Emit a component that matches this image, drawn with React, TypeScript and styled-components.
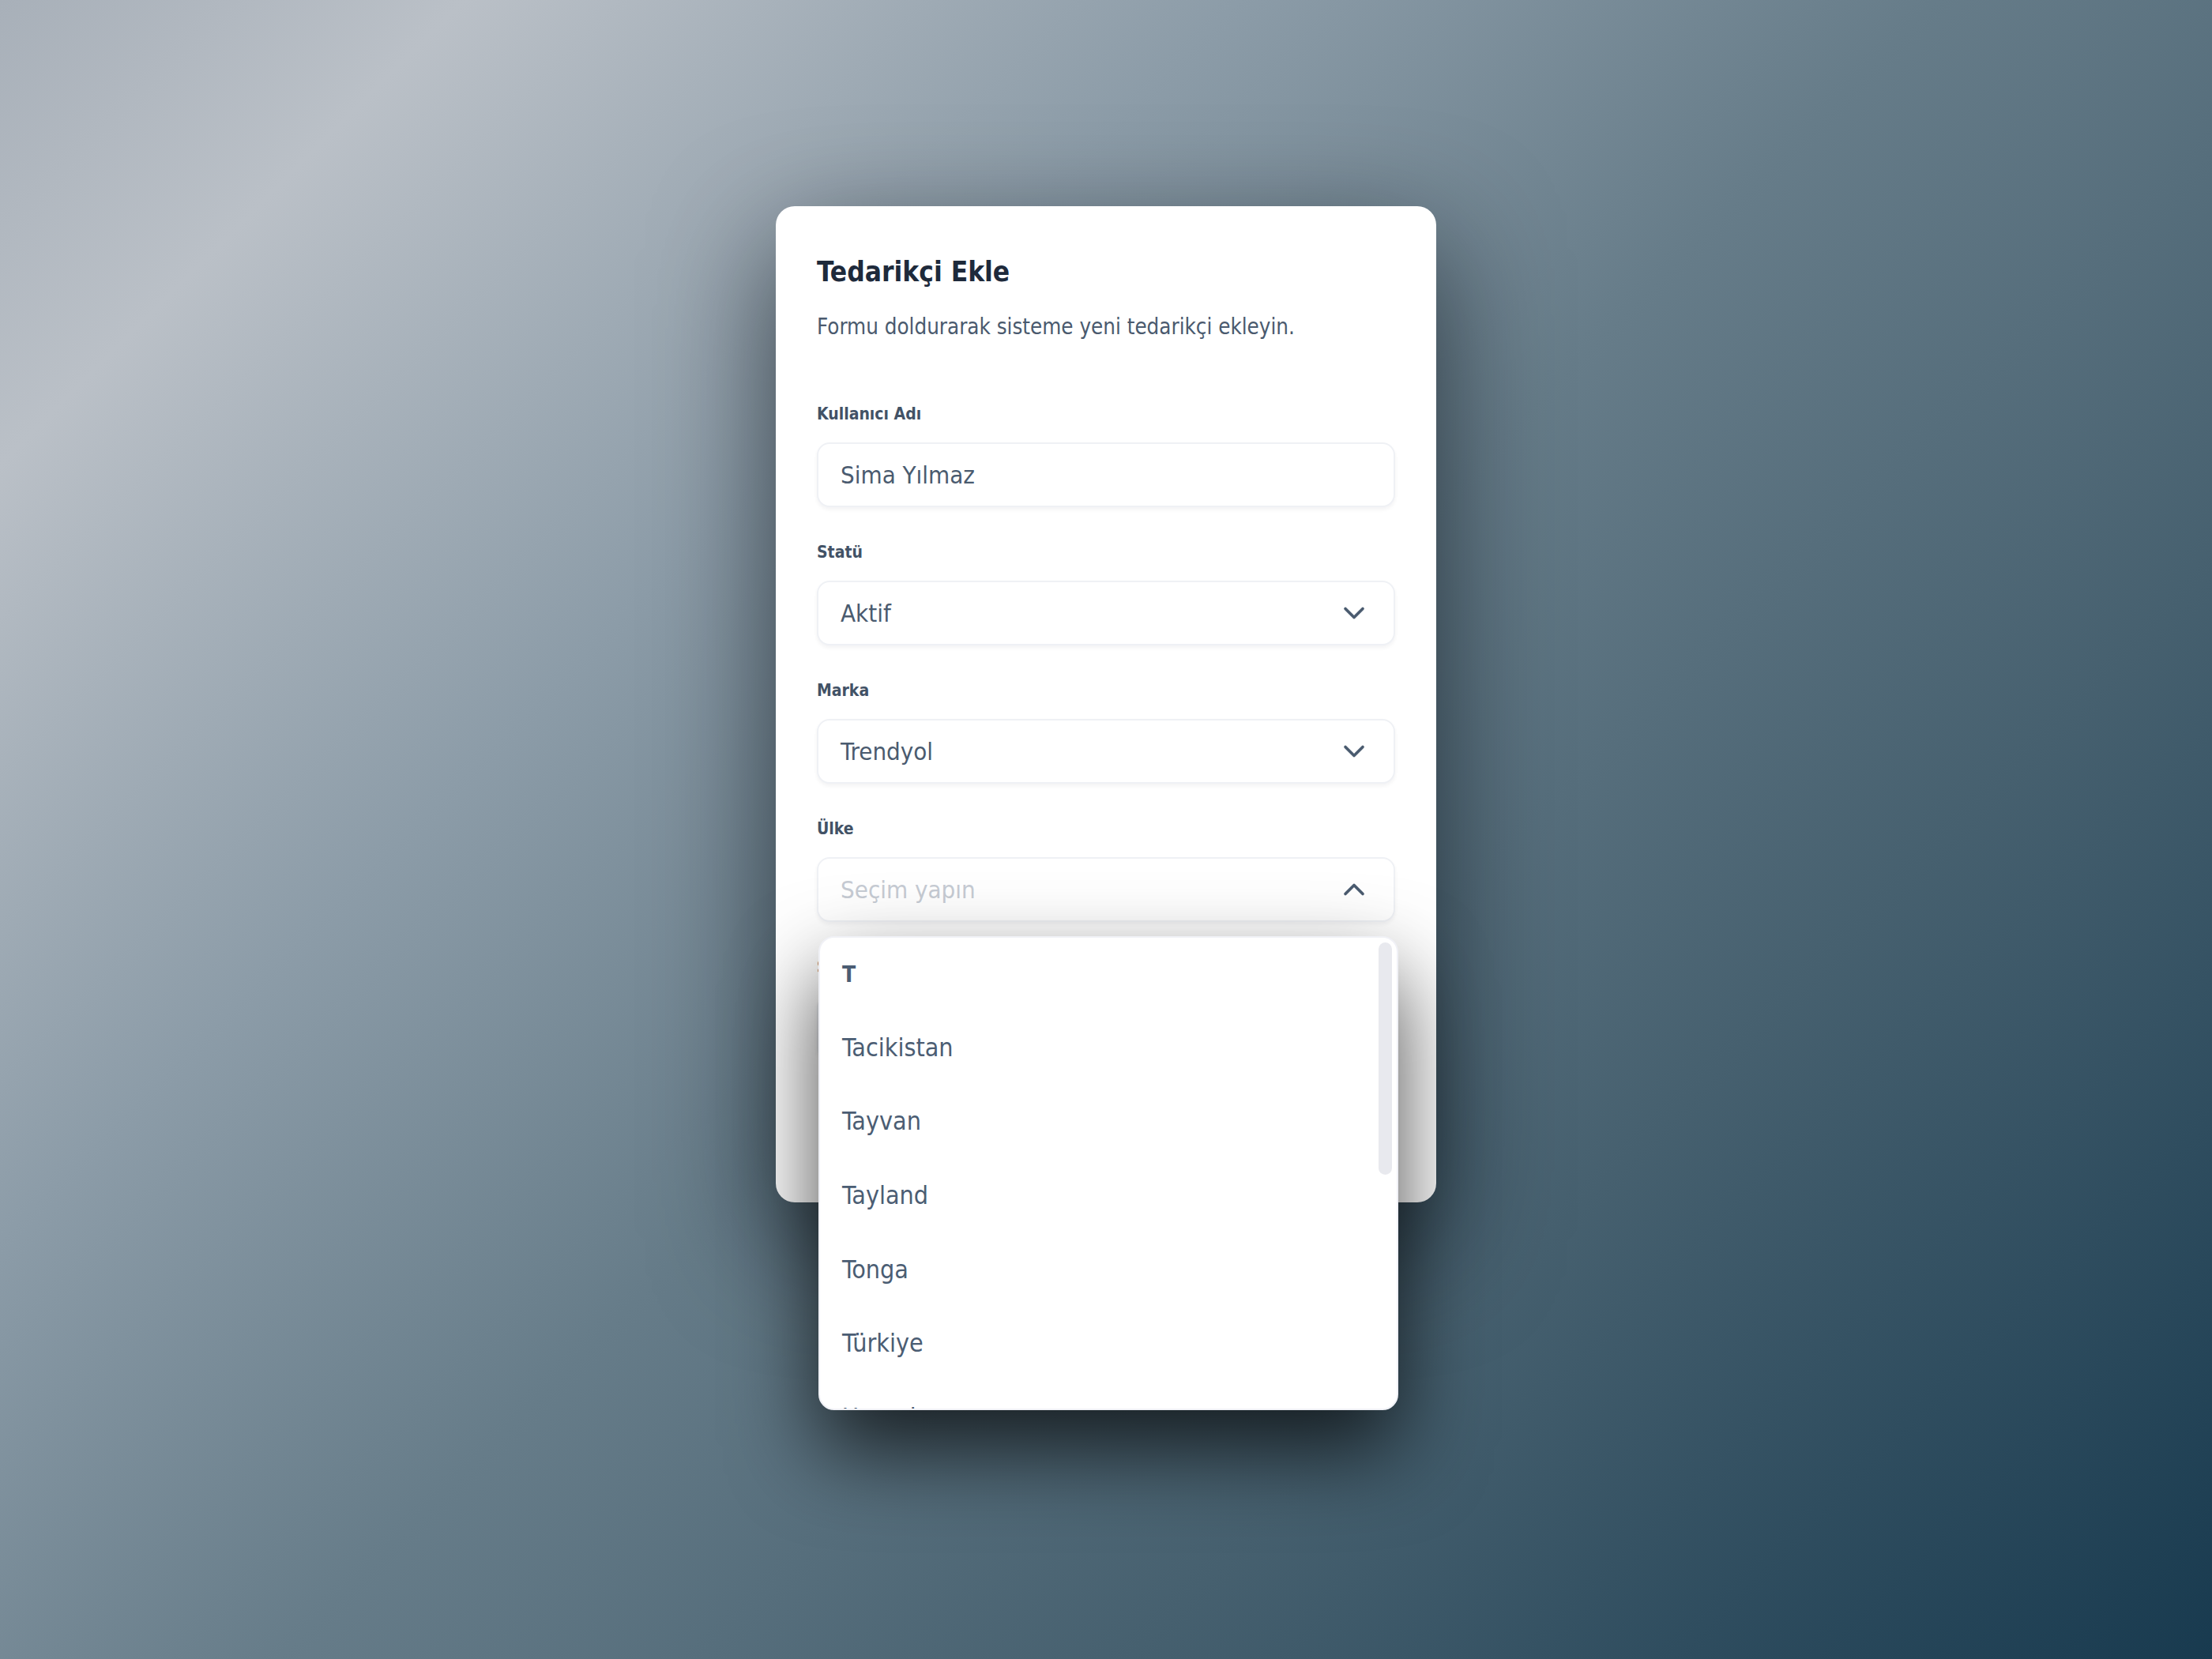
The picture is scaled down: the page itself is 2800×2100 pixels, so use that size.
import styled, { createGlobalStyle } from 'styled-components';
import { ChevronDown, ChevronUp } from 'lucide-react';

const FONT = `"DejaVu Sans Condensed", "Liberation Sans", sans-serif`;

const countries = ['Tacikistan', 'Tayvan', 'Tayland', 'Tonga', 'Türkiye', 'Uganda'];

function App() {
  return (
    <Page>
      <GlobalStyle />
      <Card>
        <Title>Tedarikçi Ekle</Title>
        <Subtitle>Formu doldurarak sisteme yeni tedarikçi ekleyin.</Subtitle>
        <Form>
          <Field>
            <Label>Kullanıcı Adı</Label>
            <Control>
              <Value>Sima Yılmaz</Value>
            </Control>
          </Field>
          <Field>
            <Label>Statü</Label>
            <Control>
              <Value>Aktif</Value>
              <ChevronDown size={44} strokeWidth={2} />
            </Control>
          </Field>
          <Field>
            <Label>Marka</Label>
            <Control>
              <Value>Trendyol</Value>
              <ChevronDown size={44} strokeWidth={2} />
            </Control>
          </Field>
          <Field>
            <Label>Ülke</Label>
            <Control>
              <Value $placeholder>Seçim yapın</Value>
              <ChevronUp size={44} strokeWidth={2} />
            </Control>
            <Dropdown>
              <GroupHeader>T</GroupHeader>
              {countries.map((c) => (
                <Option key={c}>{c}</Option>
              ))}
              <Thumb />
            </Dropdown>
          </Field>
          <Field>
            <Label>Şehir</Label>
            <Control>
              <Value $placeholder>Şehir girin</Value>
            </Control>
          </Field>
        </Form>
        <Footer>
          <Button>İptal</Button>
          <Button $primary>Kaydet</Button>
        </Footer>
      </Card>
    </Page>
  );
}

export default App;

const GlobalStyle = createGlobalStyle`
  html, body {
    margin: 0;
    padding: 0;
  }
  body {
    font-family: ${FONT};
  }
`;

const Page = styled.div`
  min-height: 2100px;
  box-sizing: border-box;
  padding-top: 261px;
  display: flex;
  justify-content: center;
  align-items: flex-start;
  background: linear-gradient(
    135deg,
    #a8b0b9 0%,
    #bac0c7 12%,
    #8c9ca8 32%,
    #667c89 50%,
    #46606f 72%,
    #183a4f 100%
  );
`;

const Card = styled.div`
  width: 836px;
  box-sizing: border-box;
  padding: 58px 52px 56px;
  background: #ffffff;
  border-radius: 24px;
  box-shadow: 0 50px 150px rgba(4, 10, 16, 0.62);
`;

const Title = styled.h2`
  margin: 0;
  font-size: 35px;
  line-height: 50px;
  font-weight: 700;
  color: #1e2a3b;
`;

const Subtitle = styled.p`
  margin: 24px 0 0;
  font-size: 27.5px;
  line-height: 40px;
  color: #4a5a6e;
`;

const Form = styled.div`
  margin-top: 76px;
  display: flex;
  flex-direction: column;
  gap: 42px;
`;

const Field = styled.div`
  position: relative;
  display: flex;
  flex-direction: column;
  gap: 21px;
`;

const Label = styled.label`
  font-size: 21px;
  line-height: 30px;
  font-weight: 700;
  color: #425266;
`;

const Control = styled.div`
  height: 82px;
  box-sizing: border-box;
  padding: 0 28px 0 28px;
  display: flex;
  align-items: center;
  justify-content: space-between;
  border: 2px solid #eff1f5;
  border-radius: 16px;
  background: #ffffff;
  box-shadow: 0 3px 5px rgba(15, 23, 42, 0.05);
  color: #4a5b6f;

  svg {
    flex: none;
    color: #4a5b6f;
  }
`;

const Value = styled.span<{ $placeholder?: boolean }>`
  font-size: 31px;
  color: ${(p) => (p.$placeholder ? '#c6cbd3' : '#4a5b6f')};
`;

const Dropdown = styled.div`
  position: absolute;
  top: calc(100% + 18px);
  left: 2px;
  right: -4px;
  height: 600px;
  box-sizing: border-box;
  overflow: hidden;
  background: #ffffff;
  border: 2px solid #f0f1f6;
  border-radius: 20px;
  box-shadow: 0 50px 110px rgba(0, 0, 0, 0.72);
  z-index: 5;
`;

const GroupHeader = styled.div`
  height: 92px;
  padding: 0 28px;
  display: flex;
  align-items: center;
  font-size: 28px;
  font-weight: 700;
  color: #4b5d73;
`;

const Option = styled.div`
  height: 93.6px;
  padding: 0 28px;
  display: flex;
  align-items: center;
  font-size: 32px;
  color: #4b5d73;
`;

const Thumb = styled.div`
  position: absolute;
  top: 6px;
  right: 6px;
  width: 17px;
  height: 294px;
  border-radius: 9px;
  background: #e8e9ee;
`;

const Footer = styled.div`
  margin-top: 42px;
  display: flex;
  justify-content: flex-end;
  gap: 20px;
`;

const Button = styled.button<{ $primary?: boolean }>`
  height: 82px;
  padding: 0 40px;
  border-radius: 16px;
  font-family: ${FONT};
  font-size: 28px;
  font-weight: 700;
  border: 2px solid ${(p) => (p.$primary ? '#4f46e5' : '#e2e8f0')};
  background: ${(p) => (p.$primary ? '#4f46e5' : '#ffffff')};
  color: ${(p) => (p.$primary ? '#ffffff' : '#334155')};
`;
